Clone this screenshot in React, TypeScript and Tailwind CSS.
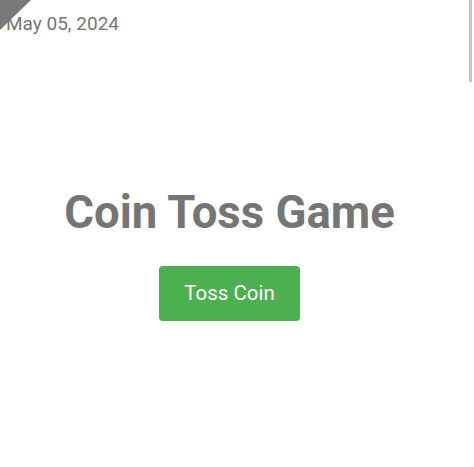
export default function App() {
  return (
    <div className="relative h-[467px] w-[474px] overflow-hidden bg-white" style={{ fontFamily: "Roboto, 'Liberation Sans', sans-serif" }}>
      {/* corner fold */}
      <div className="absolute left-0 top-0 h-0 w-0 border-r-[31px] border-t-[30px] border-r-transparent border-t-[#7a7a7a]" />
      {/* scroll thumb */}
      <div className="absolute right-[2px] top-0 h-[82px] w-[3px] bg-[#c4c4c4]" />
      <div className="w-[459px]">
        <div className="relative px-[6px] pt-[10px] text-[19px] leading-[28px] text-[#757575]">May 05, 2024</div>
        <div className="flex flex-col items-center pt-[148px]">
          <h1 className="text-[45.5px] font-bold leading-[54px] text-[#757575]">Coin Toss Game</h1>
          <button className="mt-[26px] h-[55px] w-[141px] rounded-[4px] bg-[#4caf50] text-[20.5px] text-white">Toss Coin</button>
        </div>
      </div>
    </div>
  );
}
